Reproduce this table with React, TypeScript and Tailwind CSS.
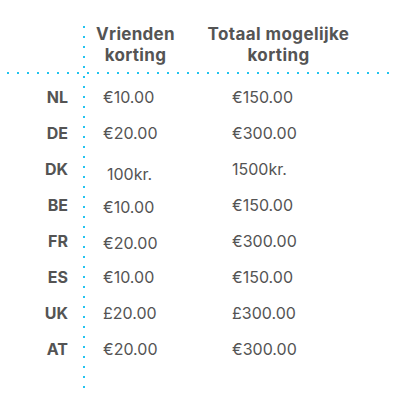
const rows: { code: string; friend: string; total: string; fx?: string }[] = [
  { code: "NL", friend: "€10.00", total: "€150.00" },
  { code: "DE", friend: "€20.00", total: "€300.00" },
  { code: "DK", friend: "100kr.", total: "1500kr.", fx: "translate-x-[4px] translate-y-[5px]" },
  { code: "BE", friend: "€10.00", total: "€150.00", fx: "translate-y-[2px]" },
  { code: "FR", friend: "€20.00", total: "€300.00", fx: "translate-y-[2px]" },
  { code: "ES", friend: "€10.00", total: "€150.00" },
  { code: "UK", friend: "£20.00", total: "£300.00" },
  { code: "AT", friend: "€20.00", total: "€300.00" },
];

const vDots =
  "w-[2px] bg-[linear-gradient(to_bottom,#22c4ef_2px,transparent_2px)] bg-[length:2px_10px] bg-repeat-y";

export default function App() {
  return (
    <div className="h-[406px] w-[400px] bg-white font-['Inter',sans-serif] text-[#545454]">
      {/* header */}
      <div className="flex h-[72px] items-start">
        <div className="w-[83px]" />
        <div className={`${vDots} mt-[25px] h-[47px] bg-[position:0_1px]`} />
        <div className="w-[101px] pt-[24px] text-center text-[17px] font-bold leading-[21px] tracking-[0.3px]">
          Vrienden
          <br />
          korting
        </div>
        <div className="w-[185px] pt-[24px] text-center text-[17px] font-bold leading-[21px] tracking-[0.4px]">
          Totaal mogelijke
          <br />
          korting
        </div>
      </div>

      {/* horizontal divider */}
      <div className="ml-[6px] h-[2px] w-[386px] bg-[linear-gradient(to_right,#22c4ef_2px,transparent_2px)] bg-[length:10px_2px] bg-[position:1px_0] bg-repeat-x" />

      {/* body */}
      <div className="flex">
        <div className="w-[83px] pt-[5px]">
          {rows.map((r) => (
            <div
              key={r.code}
              className="flex h-[36px] items-center justify-end pr-[15px] text-[16px] font-bold"
            >
              {r.code}
            </div>
          ))}
        </div>
        <div className={`${vDots} h-[318px] bg-[position:0_2px]`} />
        <div className="pt-[5px]">
          {rows.map((r) => (
            <div key={r.code} className="flex h-[36px] items-center text-[16px]">
              <div className="w-[147px] pl-[18px]">
                <span className={`inline-block ${r.fx ?? ""}`}>{r.friend}</span>
              </div>
              <div>{r.total}</div>
            </div>
          ))}
        </div>
      </div>
    </div>
  );
}
